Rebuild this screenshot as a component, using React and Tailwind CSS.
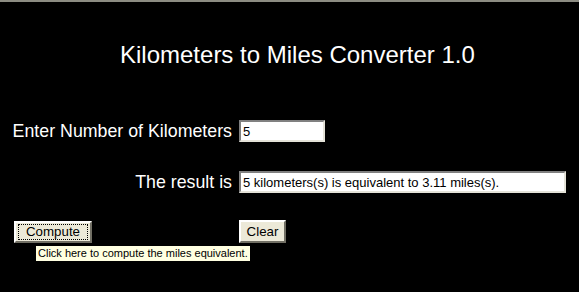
export default function App() {
  const font = { fontFamily: '"Liberation Sans", Arial, sans-serif' };
  return (
    <div className="w-[579px] h-[292px] bg-black overflow-hidden" style={font}>
      <div className="h-[2px] bg-[#8c8c82]" />
      <div className="pt-[39px] pl-[120px] text-white text-[24px] leading-[28px]">
        Kilometers to Miles Converter 1.0
      </div>
      <div className="mt-[51px] grid grid-cols-[232px_auto] gap-x-[7px] items-center">
        <label className="text-white text-[17.8px] leading-[22px] text-right">Enter Number of Kilometers</label>
        <input
          readOnly
          value="5"
          className="w-[86px] h-[22px] bg-white text-black text-[13px] px-[2px] border-2 border-t-[#808080] border-l-[#808080] border-b-[#e4e2d8] border-r-[#e4e2d8] outline-none"
        />
        <label className="mt-[29px] text-white text-[17.8px] leading-[22px] text-right">The result is</label>
        <input
          readOnly
          value="5 kilometers(s) is equivalent to 3.11 miles(s)."
          className="mt-[29px] w-[327px] h-[22px] bg-white text-black text-[13px] px-[2px] border-2 border-t-[#808080] border-l-[#808080] border-b-[#e4e2d8] border-r-[#e4e2d8] outline-none"
        />
      </div>
      <div className="mt-[28px] flex items-start">
        <div className="relative ml-[14px]">
          <button className="w-[78px] h-[22px] bg-[#ece9d8] text-black text-[13.3px] border-2 border-t-white border-l-white border-b-[#716f64] border-r-[#716f64] flex items-center justify-center">
            <span className="border border-dotted border-black w-[70px] h-[16px] flex items-center justify-center leading-none">Compute</span>
          </button>
          <div className="absolute left-[22px] top-[25px] whitespace-nowrap bg-[#ffffe1] text-black text-[11px] leading-[15px] px-[2px]">
            Click here to compute the miles equivalent.
          </div>
        </div>
        <button className="ml-[147px] -mt-[1px] w-[47px] h-[23px] bg-[#ece9d8] text-black text-[13.3px] border-2 border-t-white border-l-white border-b-[#716f64] border-r-[#716f64] flex items-center justify-center">
          Clear
        </button>
      </div>
    </div>
  );
}
